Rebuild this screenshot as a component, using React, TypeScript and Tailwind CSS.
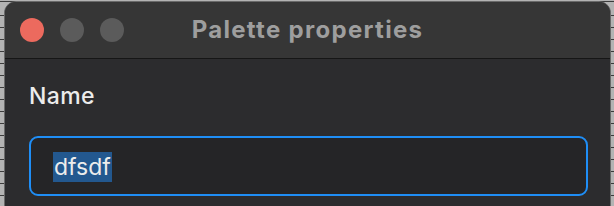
export default function App() {
  return (
    <div className="w-[614px] h-[206px] overflow-hidden bg-[#b3b3b3] bg-[repeating-linear-gradient(to_bottom,transparent_0px,transparent_11px,#3c3c3c_11px,#3c3c3c_12px)] bg-[position:0_4px] pl-[4px] pr-[3px] pt-[1px] font-['Inter','Liberation_Sans',sans-serif]">
      <div className="h-[210px] rounded-t-[12px] border border-[#6a6a6a] bg-[#2c2c2e] overflow-hidden flex flex-col">
        {/* title bar */}
        <div className="h-[57px] shrink-0 bg-[#363636] border-b border-[#161616] relative flex items-center">
          <div className="flex gap-[16px] pl-[15px]">
            <span className="w-[24px] h-[24px] rounded-full bg-[#ec6a5e]" />
            <span className="w-[24px] h-[24px] rounded-full bg-[#5b5b5b]" />
            <span className="w-[24px] h-[24px] rounded-full bg-[#5b5b5b]" />
          </div>
          <span className="absolute left-0 right-0 text-center text-[24px] font-bold text-[#9e9e9e] tracking-[1.3px]">
            Palette properties
          </span>
        </div>

        {/* content */}
        <div className="pl-[24px] pr-[22px] pt-[26px]">
          <div className="text-[23px] font-medium text-[#ececec] leading-none tracking-[0.4px]">Name</div>
          <div className="mt-[28px] h-[60px] rounded-[9px] border-2 border-[#1f8ef6] bg-[#252527] flex items-center pl-[22px]">
            <span className="bg-[#23588f] text-[23px] leading-[30px] text-[#ececec] px-[1px] mt-[2px]">dfsdf</span>
          </div>
        </div>
      </div>
    </div>
  );
}
